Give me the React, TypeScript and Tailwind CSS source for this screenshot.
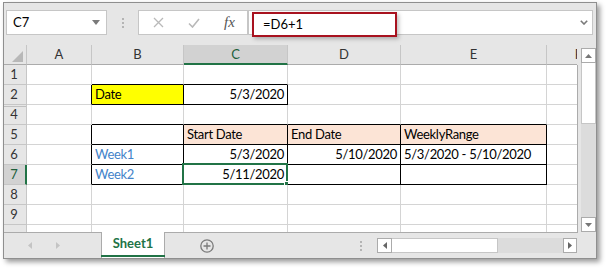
import React from 'react';

type Col = { k: string; w: number };
const cols: Col[] = [
  { k: 'A', w: 65 },
  { k: 'B', w: 92 },
  { k: 'C', w: 104 },
  { k: 'D', w: 113 },
  { k: 'E', w: 146 },
  { k: 'F', w: 64 },
];
const rows = [1, 2, 4, 5, 6, 7, 8, 9, 10];

type Cell = { t: string; align?: 'l' | 'r'; bg?: string; color?: string };
const data: Record<string, Cell> = {
  B2: { t: 'Date', bg: 'bg-[#ffff00]' },
  C2: { t: '5/3/2020', align: 'r' },
  C5: { t: 'Start Date', bg: 'bg-[#fce4d6]' },
  D5: { t: 'End Date', bg: 'bg-[#fce4d6]' },
  E5: { t: 'WeeklyRange', bg: 'bg-[#fce4d6]' },
  B6: { t: 'Week1', color: 'text-[#4383c9]' },
  C6: { t: '5/3/2020', align: 'r' },
  D6: { t: '5/10/2020', align: 'r' },
  E6: { t: '5/3/2020 - 5/10/2020' },
  B7: { t: 'Week2', color: 'text-[#4383c9]' },
  C7: { t: '5/11/2020', align: 'r' },
};

function rightBlack(r: number, c: string) {
  if (r === 2 && ['A', 'B', 'C'].includes(c)) return true;
  if (r >= 5 && r <= 7 && ['A', 'B', 'C', 'D', 'E'].includes(c)) return true;
  return false;
}
function bottomBlack(r: number, c: string) {
  if ((r === 1 || r === 2) && ['B', 'C'].includes(c)) return true;
  if (r >= 4 && r <= 7 && ['B', 'C', 'D', 'E'].includes(c)) return true;
  return false;
}

function FormulaBar() {
  return (
    <div className="h-[42px] flex items-start pt-[7px] pl-[2px] pr-[3px] shrink-0">
      <div className="w-[101px] h-[25px] bg-white border border-[#c6c6c6] flex items-center pl-[6px] pr-[6px] text-black">
        <span className="flex-1 leading-none">C7</span>
        <svg width="8" height="5" viewBox="0 0 8 5">
          <path d="M0 0H8L4 5Z" fill="#7a7a7a" />
        </svg>
      </div>
      <div className="w-[31px] h-[25px] flex flex-col items-center justify-center gap-[2px]">
        <div className="w-[2px] h-[2px] bg-[#b4b4b4]" />
        <div className="w-[2px] h-[2px] bg-[#b4b4b4]" />
        <div className="w-[2px] h-[2px] bg-[#b4b4b4]" />
      </div>
      <div className="w-[110px] h-[25px] bg-white border border-[#c6c6c6] flex items-center pl-[14px]">
        <svg width="11" height="11" viewBox="0 0 11 11">
          <path d="M1 1L10 10M10 1L1 10" stroke="#b9b9b9" strokeWidth="1.3" fill="none" />
        </svg>
        <svg className="ml-[24px]" width="12" height="10" viewBox="0 0 12 10">
          <path d="M1 5.5L4.5 9L11 1" stroke="#b9b9b9" strokeWidth="1.6" fill="none" />
        </svg>
        <span className="ml-[24px] font-['Liberation_Serif',serif] italic text-[15px] text-[#555] leading-none">
          fx
        </span>
      </div>
      <div className="flex-1 h-[25px] bg-white border border-[#c6c6c6] relative flex items-center justify-end pr-[4px]">
        <div className="absolute left-[3px] top-[1px] w-[145px] h-[25px] border-2 border-[#a8121f] bg-white shadow-[2px_2px_4px_rgba(0,0,0,0.25)] flex items-center pl-[9px] text-black">
          =D6+1
        </div>
        <svg width="8" height="5" viewBox="0 0 8 5">
          <path d="M0.8 0.8L4 4L7.2 0.8" stroke="#7a7a7a" strokeWidth="1.6" fill="none" />
        </svg>
      </div>
    </div>
  );
}

function Grid() {
  return (
    <div className="w-[573px] overflow-hidden flex flex-col">
      <div className="flex h-[20px] shrink-0">
        <div className="w-[23px] shrink-0 border-r border-r-[#c6c6c6] border-b border-b-[#ababab] flex items-end justify-end pr-[3px] pb-[2px]">
          <svg width="11" height="11" viewBox="0 0 11 11">
            <path d="M11 0V11H0Z" fill="#b8b8b8" />
          </svg>
        </div>
        {cols.map((c) =>
          c.k === 'C' ? (
            <div
              key={c.k}
              className="shrink-0 bg-[#d2d2d2] border-r border-r-[#c6c6c6] border-b-2 border-b-[#217346] text-center leading-[18px] text-[#1d5f3a]"
              style={{ width: c.w }}
            >
              {c.k}
            </div>
          ) : (
            <div
              key={c.k}
              className="shrink-0 border-r border-r-[#c6c6c6] border-b border-b-[#ababab] text-center leading-[19px] text-[#333]"
              style={{ width: c.w }}
            >
              {c.k}
            </div>
          )
        )}
      </div>
      {rows.map((r) => (
        <div key={r} className="flex h-[20px] shrink-0">
          {r === 7 ? (
            <div className="w-[23px] shrink-0 bg-[#d2d2d2] border-r-2 border-r-[#217346] border-b border-b-[#c6c6c6] text-center pr-[1px] leading-[19px] text-[#1d5f3a]">
              {r}
            </div>
          ) : r === 4 ? (
            <div className="w-[23px] shrink-0 border-r border-r-[#c6c6c6] border-b border-b-[#c6c6c6] text-center pr-[2px] leading-[19px] text-[#333] shadow-[inset_0_1px_0_#e6e6e6,inset_0_2px_0_#c0c0c0]">
              {r}
            </div>
          ) : (
            <div className="w-[23px] shrink-0 border-r border-r-[#c6c6c6] border-b border-b-[#c6c6c6] text-center pr-[2px] leading-[19px] text-[#333]">
              {r === 10 ? '' : r}
            </div>
          )}
          {cols.map((c) => {
            const id = c.k + r;
            const d = data[id];
            const rb = rightBlack(r, c.k) ? 'border-r-black' : 'border-r-[#d4d4d4]';
            const bb = bottomBlack(r, c.k) ? 'border-b-black' : 'border-b-[#d4d4d4]';
            return (
              <div
                key={id}
                className={`shrink-0 relative border-r border-b ${rb} ${bb} ${d?.bg ?? 'bg-white'} ${
                  d?.align === 'r' ? 'text-right' : 'text-left'
                } ${d?.color ?? 'text-black'} px-[3px] leading-[19px] whitespace-nowrap tracking-[-0.3px]`}
                style={{ width: c.w }}
              >
                {d?.t}
                {id === 'C7' && (
                  <div className="absolute -left-[2px] -top-[2px] -right-[1px] -bottom-[1px] border-2 border-[#217346]">
                    <div className="absolute -right-[4px] -bottom-[4px] w-[6px] h-[6px] bg-[#217346] border border-white" />
                  </div>
                )}
              </div>
            );
          })}
        </div>
      ))}
    </div>
  );
}

function VScroll() {
  return (
    <div className="w-[15px] flex flex-col pt-[3px]">
      <div className="h-[15px] bg-white border border-[#ababab] flex items-center justify-center">
        <svg width="7" height="4" viewBox="0 0 7 4">
          <path d="M0 4H7L3.5 0Z" fill="#777" />
        </svg>
      </div>
      <div className="h-[61px] bg-white border-x border-b border-[#c6c6c6]" />
      <div className="flex-1 bg-[#dcdcdc]" />
      <div className="h-[15px] bg-white border border-[#ababab] flex items-center justify-center">
        <svg width="7" height="4" viewBox="0 0 7 4">
          <path d="M0 0H7L3.5 4Z" fill="#777" />
        </svg>
      </div>
    </div>
  );
}

function TabBar() {
  return (
    <div className="flex h-[26px] shrink-0">
      <div className="w-[574px] border-t border-[#ababab] flex items-center">
        <div className="w-[97px] flex items-center pl-[24px] gap-[24px]">
          <svg width="4" height="7" viewBox="0 0 4 7">
            <path d="M4 0V7L0 3.5Z" fill="#c4c4c4" />
          </svg>
          <svg width="4" height="7" viewBox="0 0 4 7">
            <path d="M0 0V7L4 3.5Z" fill="#c4c4c4" />
          </svg>
        </div>
        <div className="self-stretch -mt-[1px] w-[64px] bg-white border-x border-[#ababab] flex flex-col">
          <div className="flex-1 flex items-center justify-center font-bold text-[#217346]">Sheet1</div>
          <div className="h-[2px] -mx-[1px] bg-[#217346]" />
          <div className="h-[1px]" />
        </div>
        <svg className="ml-[35px]" width="14" height="14" viewBox="0 0 14 14">
          <circle cx="7" cy="7" r="6.2" stroke="#7a7a7a" strokeWidth="1.3" fill="none" />
          <path d="M7 3.5V10.5M3.5 7H10.5" stroke="#7a7a7a" strokeWidth="1.3" />
        </svg>
        <div className="ml-[146px] w-[2px] flex flex-col gap-[2px]">
          <div className="w-[2px] h-[2px] bg-[#b4b4b4]" />
          <div className="w-[2px] h-[2px] bg-[#b4b4b4]" />
          <div className="w-[2px] h-[2px] bg-[#b4b4b4]" />
        </div>
        <div className="ml-[15px] w-[200px] h-[15px] flex">
          <div className="w-[15px] bg-white border border-[#ababab] flex items-center justify-center">
            <svg width="4" height="7" viewBox="0 0 4 7">
              <path d="M4 0V7L0 3.5Z" fill="#666" />
            </svg>
          </div>
          <div className="w-[106px] bg-white border-y border-r border-[#c6c6c6]" />
          <div className="w-[65px] bg-[#dcdcdc]" />
          <div className="w-[14px] bg-white border border-[#ababab] flex items-center justify-center">
            <svg width="4" height="7" viewBox="0 0 4 7">
              <path d="M0 0V7L4 3.5Z" fill="#666" />
            </svg>
          </div>
        </div>
      </div>
      <div className="flex-1" />
    </div>
  );
}

export default function App() {
  return (
    <div className="w-[606px] h-[269px] bg-white pt-[2px] pl-[3px] font-[Lato,sans-serif] text-[13px]">
      <div className="w-[594px] h-[257px] border border-[#8f8f8f] bg-[#e6e6e6] flex flex-col shadow-[3px_3px_5px_rgba(0,0,0,0.4)]">
        <FormulaBar />
        <div className="flex h-[187px] shrink-0">
          <Grid />
          <div className="w-[1px] pt-[20px]">
            <div className="h-full bg-[#ababab]" />
          </div>
          <div className="w-[3px]" />
          <VScroll />
        </div>
        <TabBar />
      </div>
    </div>
  );
}
